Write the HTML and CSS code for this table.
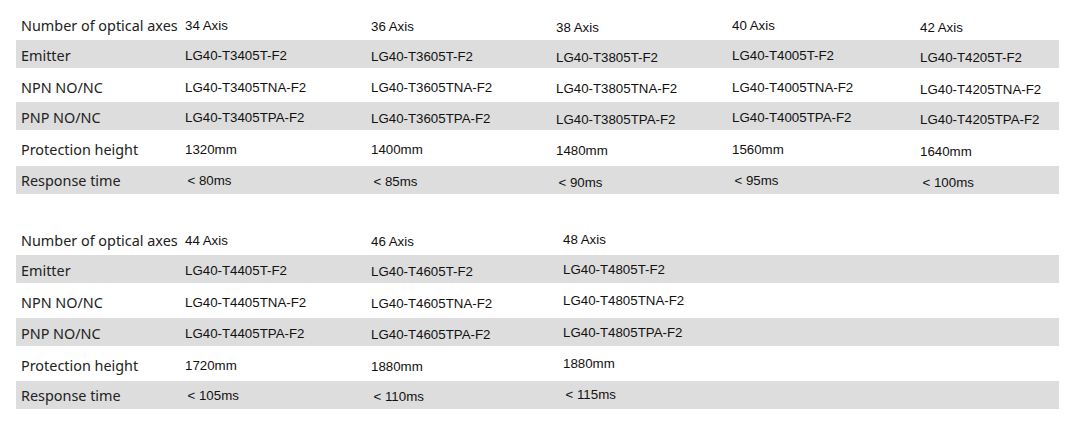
FILE: index.html
```html
<!DOCTYPE html>
<html lang="en">
<head>
<meta charset="utf-8">
<title>Optical axes specification</title>
<link rel="stylesheet" href="styles.css">
</head>
<body>
<main class="page">
  <section class="spec spec-5">
    <div class="row head"><div class="label">Number of optical axes</div><div class="val">34 Axis</div><div class="val">36 Axis</div><div class="val">38 Axis</div><div class="val">40 Axis</div><div class="val">42 Axis</div></div>
    <div class="row shade"><div class="label">Emitter</div><div class="val">LG40-T3405T-F2</div><div class="val">LG40-T3605T-F2</div><div class="val">LG40-T3805T-F2</div><div class="val">LG40-T4005T-F2</div><div class="val">LG40-T4205T-F2</div></div>
    <div class="row plain h34"><div class="label">NPN NO/NC</div><div class="val">LG40-T3405TNA-F2</div><div class="val">LG40-T3605TNA-F2</div><div class="val">LG40-T3805TNA-F2</div><div class="val">LG40-T4005TNA-F2</div><div class="val">LG40-T4205TNA-F2</div></div>
    <div class="row shade"><div class="label">PNP NO/NC</div><div class="val">LG40-T3405TPA-F2</div><div class="val">LG40-T3605TPA-F2</div><div class="val">LG40-T3805TPA-F2</div><div class="val">LG40-T4005TPA-F2</div><div class="val">LG40-T4205TPA-F2</div></div>
    <div class="row plain h36"><div class="label">Protection height</div><div class="val">1320mm</div><div class="val">1400mm</div><div class="val">1480mm</div><div class="val">1560mm</div><div class="val">1640mm</div></div>
    <div class="row shade last"><div class="label">Response time</div><div class="val resp">&lt; 80ms</div><div class="val resp">&lt; 85ms</div><div class="val resp">&lt; 90ms</div><div class="val resp">&lt; 95ms</div><div class="val resp">&lt; 100ms</div></div>
  </section>

  <section class="spec spec-3">
    <div class="row head"><div class="label">Number of optical axes</div><div class="val">44 Axis</div><div class="val">46 Axis</div><div class="val">48 Axis</div><div class="val"></div></div>
    <div class="row shade"><div class="label">Emitter</div><div class="val">LG40-T4405T-F2</div><div class="val">LG40-T4605T-F2</div><div class="val">LG40-T4805T-F2</div><div class="val"></div></div>
    <div class="row plain h35"><div class="label">NPN NO/NC</div><div class="val">LG40-T4405TNA-F2</div><div class="val">LG40-T4605TNA-F2</div><div class="val">LG40-T4805TNA-F2</div><div class="val"></div></div>
    <div class="row shade"><div class="label">PNP NO/NC</div><div class="val">LG40-T4405TPA-F2</div><div class="val">LG40-T4605TPA-F2</div><div class="val">LG40-T4805TPA-F2</div><div class="val"></div></div>
    <div class="row plain h35"><div class="label">Protection height</div><div class="val">1720mm</div><div class="val">1880mm</div><div class="val">1880mm</div><div class="val"></div></div>
    <div class="row shade last"><div class="label">Response time</div><div class="val resp">&lt; 105ms</div><div class="val resp">&lt; 110ms</div><div class="val resp">&lt; 115ms</div><div class="val"></div></div>
  </section>
</main>
</body>
</html>
```

FILE: styles.css
```css
html, body {
  margin: 0;
  padding: 0;
  background: #ffffff;
}

.page {
  padding: 9px 0 0 16px;
  width: 1043px;
}

.spec + .spec {
  margin-top: 30px;
}

.row {
  display: grid;
  height: 28px;
  box-sizing: border-box;
  --p: 6px;
}

.spec-5 .row {
  grid-template-columns: 169px 186px 185px 176px 188px 139px;
}

.spec-3 .row {
  grid-template-columns: 169px 186px 192px 496px;
}

.row.head { height: 31px; --p: 7px; }
.row.shade { background: #dddddd; }
.row.plain { --p: 9.5px; }
.row.h34 { height: 34px; }
.row.h35 { height: 35px; }
.row.h36 { height: 36px; }
.row.last { --p: 5px; }

.label {
  padding: var(--p) 0 0 5px;
  font-family: "Noto Sans", "Open Sans", sans-serif;
  font-size: 14.4px;
  line-height: 20px;
  color: #222222;
  white-space: nowrap;
}

.val {
  padding-top: calc(var(--p) + var(--o, 0px));
  font-family: "Liberation Sans", Arial, sans-serif;
  font-size: 13.3px;
  line-height: 20px;
  color: #111111;
  white-space: nowrap;
}

.val.resp { padding-left: 2.5px; }

.spec-5 .val:nth-child(3) { --o: 0.5px; }
.spec-5 .val:nth-child(4) { --o: 1.5px; }
.spec-5 .val:nth-child(5) { --o: 0px; }
.spec-5 .val:nth-child(6) { --o: 2px; }

.spec-3 .val:nth-child(3) { --o: 1px; }
.spec-3 .val:nth-child(4) { --o: -1.5px; }
```
